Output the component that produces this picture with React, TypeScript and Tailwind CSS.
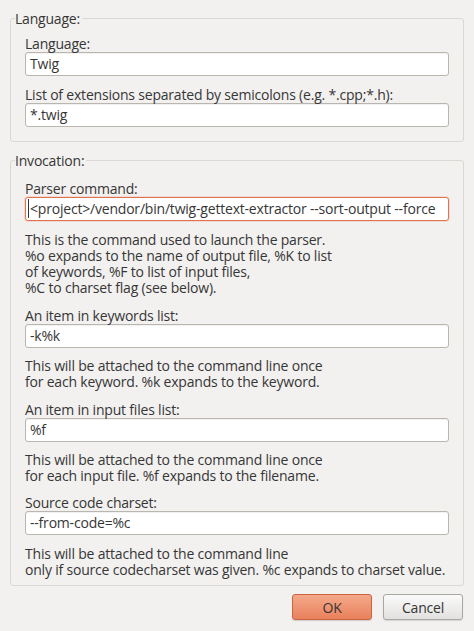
import React from "react";

const font = { fontFamily: '"Open Sans", "DejaVu Sans", sans-serif' };

const Field = ({
  label,
  value,
  focused = false,
  className = "",
}: {
  label: string;
  value: string;
  focused?: boolean;
  className?: string;
}) => (
  <div className={className}>
    <div className="h-[17px] leading-[17px] text-[#363636]">{label}</div>
    <div
      className={
        "h-[24px] rounded-[3px] border bg-white px-[4px] leading-[22px] text-[#363636] overflow-hidden whitespace-nowrap " +
        (focused
          ? "border-[#e0734f] shadow-[0_0_0_1px_rgba(240,150,120,0.25)]"
          : "border-[#b9b6b0] shadow-[inset_0_1px_1px_rgba(0,0,0,0.06)]")
      }
    >
      {focused ? <span className="-ml-[2px] border-l border-[#363636] pl-[1px]">{value}</span> : value}
    </div>
  </div>
);

const Help = ({ lines, className = "" }: { lines: string[]; className?: string }) => (
  <div className={"text-[#363636] leading-[16px] " + className}>
    {lines.map((l) => (
      <div key={l}>{l}</div>
    ))}
  </div>
);

export default function App() {
  return (
    <div className="w-[474px] h-[631px] bg-[#f2f1f0] px-[10px] pt-[10px] text-[14px] tracking-[-0.2px]" style={font}>
      <fieldset className="w-[454px] rounded-[3px] border border-[#dad8d3] px-[14px] pb-[14px]">
        <legend className="ml-[-10px] px-0 pr-[2px] leading-[17px] text-[#363636]">Language:</legend>
        <div className="pt-[8px] flex flex-col gap-[10px]">
          <Field label="Language:" value="Twig" />
          <Field label="List of extensions separated by semicolons (e.g. *.cpp;*.h):" value="*.twig" />
        </div>
      </fieldset>

      <fieldset className="mt-[10px] w-[454px] rounded-[3px] border border-[#dad8d3] px-[14px] pb-[7px]">
        <legend className="ml-[-10px] px-0 pr-[2px] leading-[17px] text-[#363636]">Invocation:</legend>
        <div className="pt-[11px]">
          <Field label="Parser command:" value="<project>/vendor/bin/twig-gettext-extractor --sort-output --force" focused />
          <Help
            className="mt-[11px]"
            lines={[
              "This is the command used to launch the parser.",
              "%o expands to the name of output file, %K to list",
              "of keywords, %F to list of input files,",
              "%C to charset flag (see below).",
            ]}
          />
          <Field className="mt-[11px]" label="An item in keywords list:" value="-k%k" />
          <Help
            className="mt-[10px]"
            lines={["This will be attached to the command line once", "for each keyword. %k expands to the keyword."]}
          />
          <Field className="mt-[11px]" label="An item in input files list:" value="%f" />
          <Help
            className="mt-[10px]"
            lines={["This will be attached to the command line once", "for each input file. %f expands to the filename."]}
          />
          <Field className="mt-[10px]" label="Source code charset:" value="--from-code=%c" />
          <Help
            className="mt-[11px]"
            lines={["This will be attached to the command line", "only if source codecharset was given. %c expands to charset value."]}
          />
        </div>
      </fieldset>

      <div className="mt-[8px] flex justify-end gap-[11px] pr-[1px]">
        <button className="h-[26px] w-[80px] rounded-[3px] border border-[#c9643f] bg-gradient-to-b from-[#f4a98a] to-[#e9805c] text-[#363636] shadow-[0_1px_1px_rgba(0,0,0,0.15)]">
          OK
        </button>
        <button className="h-[26px] w-[80px] rounded-[3px] border border-[#a9a7a2] bg-gradient-to-b from-[#fafafa] to-[#e2e1df] text-[#363636] shadow-[0_1px_1px_rgba(0,0,0,0.12)]">
          Cancel
        </button>
      </div>
    </div>
  );
}
